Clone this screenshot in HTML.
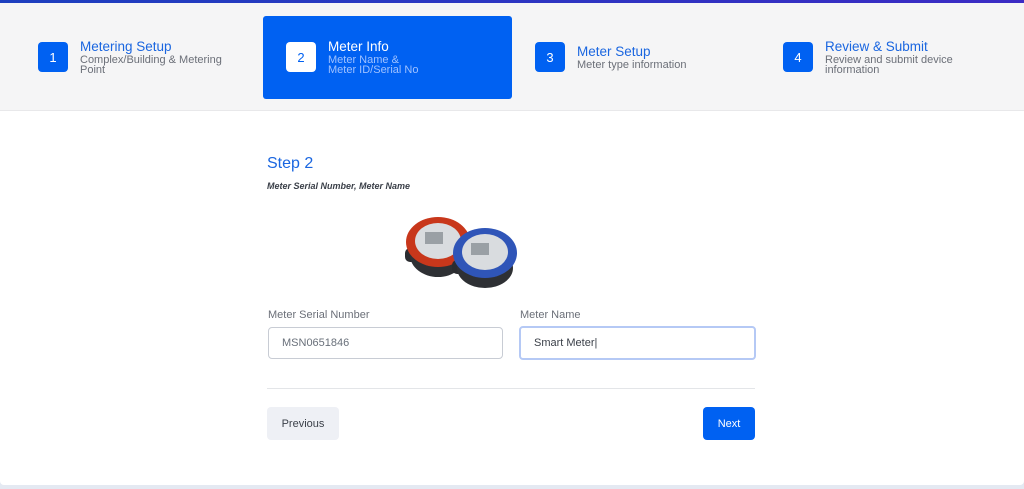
<!DOCTYPE html>
<html><head><style>
*{box-sizing:border-box;margin:0;padding:0}
body{width:1024px;height:489px;background:#e4e9f2;font-family:"Liberation Sans",sans-serif;position:relative;overflow:hidden}
.top{position:absolute;left:0;top:0;width:1024px;height:3px;background:linear-gradient(90deg,#1d3fbf,#3b2bc4)}
.card{position:absolute;left:0;top:3px;width:1024px;height:482px;background:#fff;border-radius:0 0 4px 4px}
.hdr{position:absolute;left:0;top:3px;width:1024px;height:108px;background:#f5f5f6;border-bottom:1px solid #e8e8ea}
.step{position:absolute;display:flex;align-items:center}
.num{width:30px;height:30px;border-radius:4px;background:#0061f2;color:#fff;font-size:13px;display:flex;align-items:center;justify-content:center;margin-right:12px;flex:none}
.t{color:#1a66e0;font-size:13.5px;line-height:15px;margin-bottom:1px}
.s{color:#6b6f78;font-size:11px;line-height:10px}
.act{position:absolute;left:263px;top:16px;width:249px;height:83px;background:#0061f2;border-radius:3px}
.cur .num{background:#fff;color:#0061f2}
.cur .t{color:#fff}.cur .s{color:#9ec1ff}
.lbl{position:absolute;font-size:11px;color:#6b6f78}
.inp{position:absolute;height:32px;border:1px solid #c8ccd4;border-radius:4px;font-size:11px;color:#69707a;padding:0 13px;line-height:30px}
.btn{position:absolute;height:33px;border-radius:4px;font-size:11px;display:flex;align-items:center;justify-content:center}
</style></head><body>
<div class="card"></div>
<div class="hdr"></div>
<div class="top"></div>
<div class="step" style="left:38px;top:39px"><div class="num">1</div><div><div class="t">Metering Setup</div><div class="s">Complex/Building &amp; Metering<br>Point</div></div></div>
<div class="act"></div>
<div class="step cur" style="left:286px;top:39px"><div class="num">2</div><div><div class="t">Meter Info</div><div class="s">Meter Name &amp;<br>Meter ID/Serial No</div></div></div>
<div class="step" style="left:535px;top:42px"><div class="num">3</div><div><div class="t">Meter Setup</div><div class="s">Meter type information</div></div></div>
<div class="step" style="left:783px;top:39px"><div class="num">4</div><div><div class="t">Review &amp; Submit</div><div class="s">Review and submit device<br>information</div></div></div>
<div style="position:absolute;left:267px;top:155px;font-size:16px;color:#1a66e0">Step 2</div>
<div style="position:absolute;left:267px;top:181px;font-size:9px;font-style:italic;font-weight:bold;color:#3a3f48">Meter Serial Number, Meter Name</div>
<svg style="position:absolute;left:400px;top:210px" width="125" height="80" viewBox="0 0 125 80">
<rect x="5" y="38" width="12" height="14" rx="5" fill="#2a2c30"/>
<ellipse cx="38" cy="45" rx="28" ry="22" fill="#2e3034"/>
<ellipse cx="38" cy="32" rx="32" ry="25" fill="#c8371b"/>
<ellipse cx="38" cy="31" rx="23" ry="18" fill="#d9dcdf"/>
<rect x="25" y="22" width="18" height="12" fill="#9aa0a5"/>
<rect x="52" y="50" width="12" height="14" rx="5" fill="#2a2c30"/>
<ellipse cx="85" cy="58" rx="28" ry="20" fill="#2e3034"/>
<ellipse cx="85" cy="43" rx="32" ry="25" fill="#2f55b8"/>
<ellipse cx="85" cy="42" rx="23" ry="18" fill="#d9dcdf"/>
<rect x="71" y="33" width="18" height="12" fill="#9aa0a5"/>
</svg>
<div class="lbl" style="left:268px;top:309px">Meter Serial Number</div>
<div class="lbl" style="left:520px;top:309px">Meter Name</div>
<div class="inp" style="left:268px;top:327px;width:235px">MSN0651846</div>
<div class="inp" style="left:519px;top:326px;width:237px;height:34px;border:2px solid #b5c9f5;color:#3a3f48;line-height:30px">Smart Meter|</div>
<div style="position:absolute;left:267px;top:388px;width:488px;height:1px;background:#e3e5e8"></div>
<div class="btn" style="left:267px;top:407px;width:72px;background:#eef0f5;color:#3a3f48">Previous</div>
<div class="btn" style="left:703px;top:407px;width:52px;background:#0061f2;color:#fff">Next</div>
</body></html>
